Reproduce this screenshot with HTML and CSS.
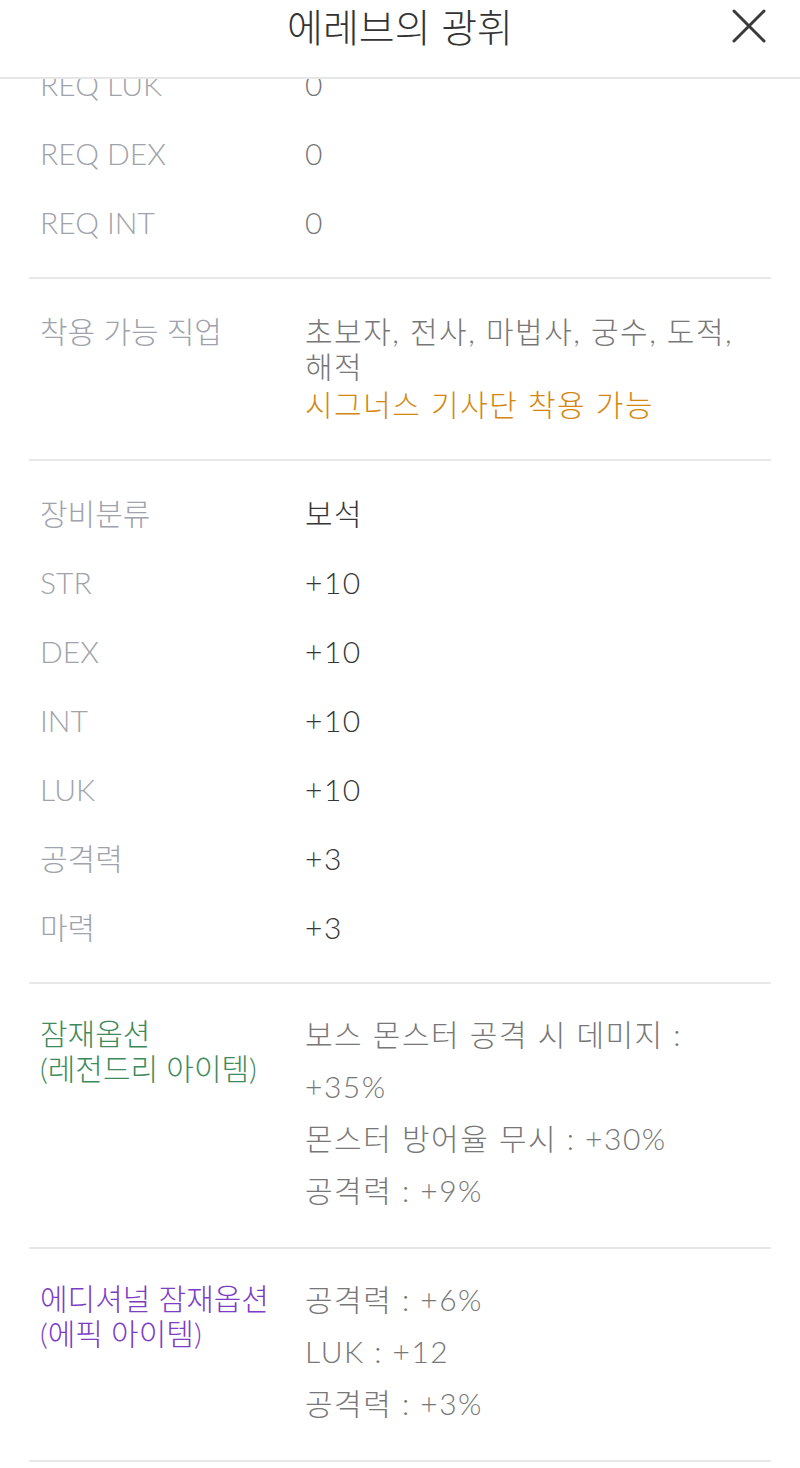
FILE: index.html
```html
<!DOCTYPE html>
<html lang="ko">
<head>
<meta charset="utf-8">
<title>에레브의 광휘</title>
<link rel="stylesheet" href="styles.css">
</head>
<body>
<header class="topbar">
  <h1 class="title">에레브의 광휘</h1>
  <button class="close" aria-label="닫기">
    <svg width="34" height="34" viewBox="0 0 34 34"><path d="M2 2 L32 32 M32 2 L2 32" stroke="#3a3a3a" stroke-width="3" stroke-linecap="round" fill="none"/></svg>
  </button>
</header>
<main class="sheet">
  <section class="group">
    <div class="row"><div class="label">REQ LUK</div><div class="value">0</div></div>
    <div class="row"><div class="label">REQ DEX</div><div class="value">0</div></div>
    <div class="row"><div class="label">REQ INT</div><div class="value">0</div></div>
  </section>
  <section class="group">
    <div class="row">
      <div class="label">착용 가능 직업</div>
      <div class="value">초보자, 전사, 마법사, 궁수, 도적,<br>해적<div class="orange">시그너스 기사단 착용 가능</div></div>
    </div>
  </section>
  <section class="group">
    <div class="row"><div class="label">장비분류</div><div class="value dark">보석</div></div>
    <div class="row"><div class="label">STR</div><div class="value dark">+10</div></div>
    <div class="row"><div class="label">DEX</div><div class="value dark">+10</div></div>
    <div class="row"><div class="label">INT</div><div class="value dark">+10</div></div>
    <div class="row"><div class="label">LUK</div><div class="value dark">+10</div></div>
    <div class="row"><div class="label">공격력</div><div class="value dark">+3</div></div>
    <div class="row"><div class="label">마력</div><div class="value dark">+3</div></div>
  </section>
  <section class="group">
    <div class="row multi">
      <div class="label green">잠재옵션<br>(레전드리 아이템)</div>
      <div class="value lines">
        <div>보스 몬스터 공격 시 데미지 :<br>+35%</div>
        <div>몬스터 방어율 무시 : +30%</div>
        <div>공격력 : +9%</div>
      </div>
    </div>
  </section>
  <section class="group">
    <div class="row multi">
      <div class="label purple">에디셔널 잠재옵션<br>(에픽 아이템)</div>
      <div class="value lines">
        <div>공격력 : +6%</div>
        <div>LUK : +12</div>
        <div>공격력 : +3%</div>
      </div>
    </div>
  </section>
</main>
</body>
</html>
```
FILE: styles.css
```css
html, body {
  margin: 0;
  padding: 0;
  background: #ffffff;
}
body {
  font-family: "Lato", "Noto Sans CJK KR", sans-serif;
  font-size: 30px;
  font-weight: 300;
  color: #777777;
  width: 800px;
  overflow: hidden;
}
.topbar {
  position: sticky;
  top: 0;
  z-index: 2;
  height: 77px;
  background: #ffffff;
  border-bottom: 2px solid #e6e6e6;
  display: flex;
  justify-content: center;
}
.title {
  margin: 0;
  font-size: 39px;
  font-weight: 300;
  line-height: 54px;
  color: #333333;
}
.close {
  position: absolute;
  top: 9px;
  right: 34px;
  width: 34px;
  height: 34px;
  padding: 0;
  border: 0;
  background: none;
}
.close svg { display: block; }
.sheet {
  margin-top: -47px;
  display: flex;
  flex-direction: column;
}
.group {
  margin: 0 29px;
  padding: 18px 11px 20px;
  border-bottom: 2px solid #e8e8e8;
}
.row {
  display: grid;
  grid-template-columns: 265px 455px;
  padding: 17px 0;
  line-height: 35px;
}
.label {
  color: #a0a3ab;
}
.value {
  color: #777777;
  letter-spacing: 1.5px;
}
.value.dark {
  color: #363636;
}
.orange {
  color: #d3870f;
  margin-top: 3px;
}
.green { color: #3f8a5b; }
.purple { color: #7d3cc6; }
.row.multi {
  padding: 14px 0 20px;
}
.lines {
  line-height: 52px;
  margin: -8.5px 0;
}
```
